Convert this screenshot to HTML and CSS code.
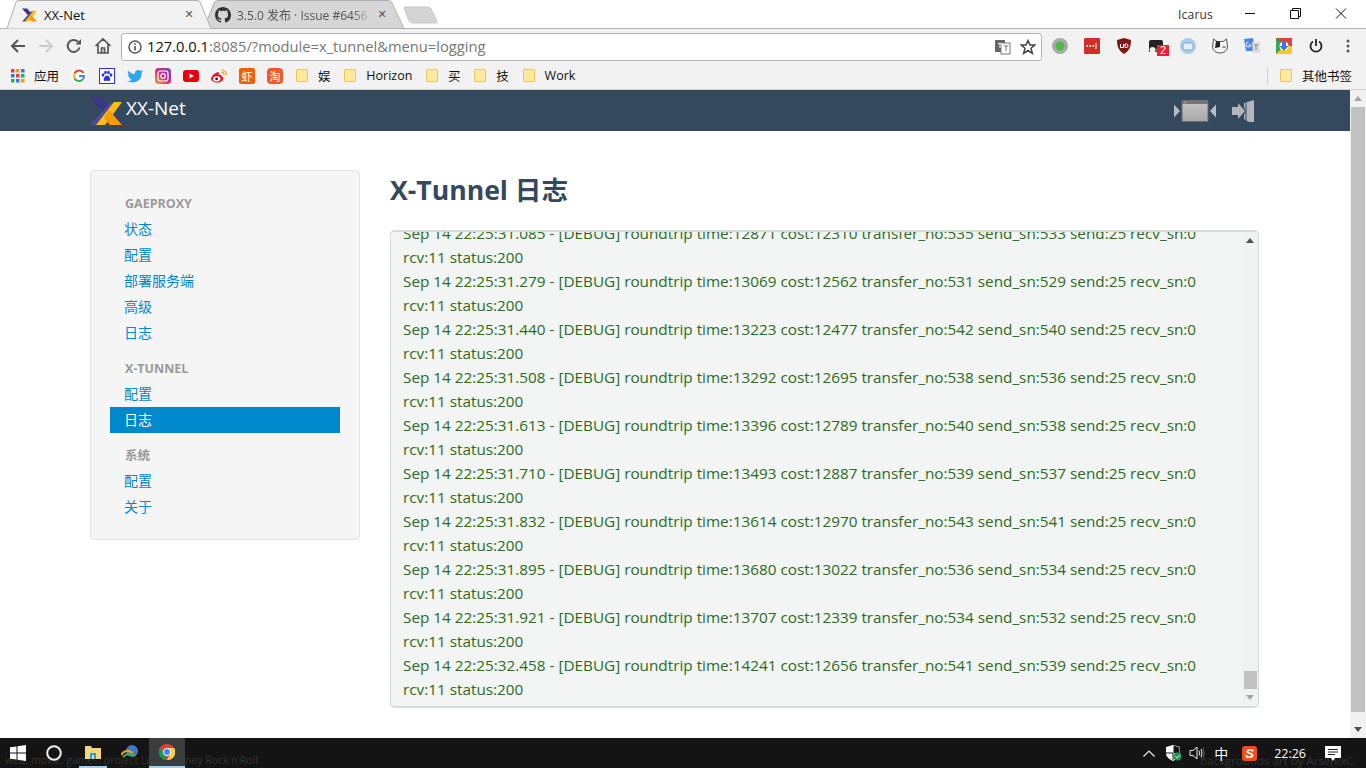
FILE: index.html
```html
<!DOCTYPE html>
<html lang="zh">
<head>
<meta charset="utf-8">
<title>XX-Net</title>
<link rel="stylesheet" href="styles.css">
</head>
<body>
<div class="screen">
  <header class="tabstrip">
    <div class="tab tab-active">
      <svg class="tab-bg" width="212" height="29" viewBox="0 0 212 29"><path d="M0 28.500H7L16 2Q16.500 .5 19 .5H197Q199 .5 200 2L211 28.500" fill="#f2f2f2" stroke="#b0b0b0"/></svg>
      <svg class="tab-ico" width="16" height="16" viewBox="0 0 34 32"><path d="M0 2H11L22 15 16 20Z" fill="#3a3785"/><path d="M0 30L20 8H28L8 30Z" fill="#4b4a9c"/><path d="M24 7H32L15 30H6Z" fill="#fbc00f"/><path d="M19 15L32 30H20L14 23Z" fill="#f59c0c"/></svg>
      <span class="tab-title">XX-Net</span>
      <span class="tab-x">✕</span>
    </div>
    <div class="tab tab-idle">
      <svg class="tab-bg" width="200" height="29" viewBox="0 0 200 29"><path d="M0 28.500H200L188 3Q187 .5 184 .5H14Q11 .5 10 3Z" fill="#d6d6d6" stroke="#b0b0b0"/></svg>
      <svg class="tab-ico" width="16" height="16" viewBox="0 0 16 16"><path fill="#333" d="M8 0C3.58 0 0 3.58 0 8c0 3.54 2.29 6.53 5.47 7.59.4.07.55-.17.55-.38v-1.34c-2.23.48-2.7-1.07-2.7-1.07-.36-.92-.89-1.17-.89-1.17-.73-.5.05-.49.05-.49.8.06 1.23.83 1.23.83.71 1.22 1.87.87 2.33.66.07-.52.28-.87.5-1.07-1.78-.2-3.64-.89-3.64-3.95 0-.87.31-1.59.82-2.15-.08-.2-.36-1.02.08-2.12 0 0 .67-.21 2.2.82A7.7 7.7 0 0 1 8 3.87c.68 0 1.36.09 2 .27 1.53-1.04 2.2-.82 2.2-.82.44 1.1.16 1.92.08 2.12.51.56.82 1.27.82 2.15 0 3.07-1.87 3.75-3.65 3.95.29.25.54.73.54 1.48v2.2c0 .21.15.46.55.38A8 8 0 0 0 16 8c0-4.42-3.58-8-8-8z"/></svg>
      <span class="tab-title tab-fade">3.5.0 发布 · Issue #6456</span>
      <span class="tab-x">✕</span>
    </div>
    <svg class="newtab" width="36" height="18" viewBox="0 0 36 18"><path d="M1 2Q1 1 3 1H25Q27 1 28 3L34 15Q34.500 17 33 17H9Q7 17 6 15Z" fill="#d4d4d4" stroke="#c8c8c8"/></svg>
    <div class="strip-fill"></div>
    <span class="user">Icarus</span>
    <div class="winbtns">
      <svg width="46" height="28" viewBox="0 0 46 28"><path d="M19 13.500H29" stroke="#111"/></svg>
      <svg width="46" height="28" viewBox="0 0 46 28"><path d="M18.500 10.500H26.500V18.500H18.500ZM20.500 10V8.500H28.500V16.500H27" fill="none" stroke="#111"/></svg>
      <svg width="46" height="28" viewBox="0 0 46 28"><path d="M18 8.500L28 18.500M28 8.500L18 18.500" stroke="#111"/></svg>
    </div>
  </header>

  <div class="toolbar">
    <svg class="nav" width="16" height="16" viewBox="0 0 16 16"><path d="M15 8H2M8 2L2 8L8 14" fill="none" stroke="#555" stroke-width="2"/></svg>
    <svg class="nav" width="16" height="16" viewBox="0 0 16 16"><path d="M1 8H14M8 2L14 8L8 14" fill="none" stroke="#ccc" stroke-width="2"/></svg>
    <svg class="nav" width="16" height="16" viewBox="0 0 16 16"><path d="M13.500 9.500A6 6 0 1 1 12 3.700" fill="none" stroke="#555" stroke-width="2"/><path d="M9.500 6.500H15V1Z" fill="#555"/></svg>
    <svg class="nav" width="18" height="18" viewBox="0 0 18 18"><path d="M1.500 9L9 2L16.500 9M4 7.500V16H14V7.500M7.500 16V11H10.500V16" fill="none" stroke="#555" stroke-width="1.700"/></svg>
    <div class="omnibox">
      <svg width="14" height="14" viewBox="0 0 14 14"><circle cx="7" cy="7" r="6" fill="none" stroke="#555" stroke-width="1.500"/><path d="M7 6V10.500M7 3.200V4.800" stroke="#555" stroke-width="1.700"/></svg>
      <span class="url"><b class="url-host">127.0.0.1</b>:8085/?module=x_tunnel&amp;menu=logging</span>
      <svg class="omni-end" width="16" height="16" viewBox="0 0 16 16"><rect x="0" y="1" width="10" height="12" fill="#666"/><rect x="6" y="4" width="9" height="11" fill="#fff" stroke="#777"/><path d="M3 4.500H7M5 4V9" stroke="#fff"/><path d="M9 7H13M11 6.500V12" stroke="#777"/></svg>
      <svg class="omni-star" width="16" height="16" viewBox="0 0 16 16"><path d="M8 1.500L10 6H14.800L11 9.200L12.300 14.300L8 11.500L3.700 14.300L5 9.200L1.200 6H6Z" fill="none" stroke="#444" stroke-width="1.500"/></svg>
    </div>
    <div class="exts">
      <svg width="16" height="16" viewBox="0 0 16 16"><circle cx="8" cy="8" r="8" fill="#aaa"/><circle cx="8" cy="8" r="4.500" fill="#4cb84c"/></svg>
      <svg width="16" height="16" viewBox="0 0 16 16"><rect width="16" height="16" rx="1" fill="#d32d27"/><path d="M2.500 8H4M5.500 8H7M8.500 8H10" stroke="#fff" stroke-width="2"/><path d="M12 5V11" stroke="#fff"/></svg>
      <svg width="16" height="16" viewBox="0 0 16 16"><path d="M8 0L15 2C15 9 13 13 8 16 3 13 1 9 1 2Z" fill="#7e1616"/><path d="M4.500 6V9.500H7.500V6M9 6V9.500H10.500Q12 9.500 12 7.800 12 6 10.500 6Z" fill="none" stroke="#fff"/></svg>
      <div class="ext-badge">
        <svg width="16" height="16" viewBox="0 0 16 16"><path d="M3 1H13Q15 1 15 3V13H1V3Q1 1 3 1Z" fill="#222"/><circle cx="4.500" cy="11" r="3" fill="#eee"/><circle cx="11.500" cy="11" r="3" fill="#eee"/></svg>
        <span class="badge">2</span>
      </div>
      <svg width="16" height="16" viewBox="0 0 16 16"><circle cx="8" cy="8" r="8" fill="#a9cdea"/><rect x="3" y="5" width="10" height="7" rx="1" fill="#e4eef6" stroke="#7fa9cc"/></svg>
      <svg width="16" height="16" viewBox="0 0 16 16"><path d="M1.500 1L5 3.500H11L14.500 1L15.500 9Q14.500 15 8 15 1.500 15 .5 9Z" fill="#f4f4f4" stroke="#555"/><path d="M4 3L8 4V9L3 10Z" fill="#222"/><path d="M10.500 9H13.500" stroke="#333"/></svg>
      <svg width="16" height="16" viewBox="0 0 16 16"><path d="M0 1L9 0L11 13H2Z" fill="#4a86ea"/><path d="M8 4H16V15H9Z" fill="#ddd"/><path d="M4.500 4A2.500 2.500 0 1 0 7 7H4.500" fill="none" stroke="#fff"/><path d="M10 7H14M12 6V12" stroke="#888"/></svg>
      <svg width="16" height="16" viewBox="0 0 16 16"><rect width="16" height="16" fill="#d9443b"/><path d="M0 0V16L8 8Z" fill="#31a853"/><path d="M16 16H0L8 8 16 8Z" fill="#f7cb1d"/><circle cx="8" cy="8" r="4.500" fill="#fff"/><path d="M6 3H10V8H12.500L8 13 3.500 8H6Z" fill="#3b78d8"/></svg>
      <svg width="16" height="14" viewBox="-1 0 16 14"><path d="M4 2.500A5.500 5.500 0 1 0 10 2.500M7 0V7" fill="none" stroke="#222" stroke-width="1.800"/></svg>
      <svg width="16" height="14" viewBox="-6 0 16 14"><circle cx="2" cy="2" r="1.500" fill="#555"/><circle cx="2" cy="7" r="1.500" fill="#555"/><circle cx="2" cy="12" r="1.500" fill="#555"/></svg>
    </div>
  </div>

  <nav class="bookmarks">
    <svg class="apps" width="14" height="14" viewBox="0 0 14 14"><g><rect width="3.500" height="3.500" fill="#d9443b"/><rect x="5" width="3.500" height="3.500" fill="#e8a21a"/><rect x="10" width="3.500" height="3.500" fill="#3c78d8"/><rect y="5" width="3.500" height="3.500" fill="#3c78d8"/><rect x="5" y="5" width="3.500" height="3.500" fill="#d9443b"/><rect x="10" y="5" width="3.500" height="3.500" fill="#3aa655"/><rect y="10" width="3.500" height="3.500" fill="#3aa655"/><rect x="5" y="10" width="3.500" height="3.500" fill="#3c78d8"/><rect x="10" y="10" width="3.500" height="3.500" fill="#e8a21a"/></g></svg>
    <span class="bm-text bm-apps">应用</span>
    <div class="favs">
      <svg width="16" height="16" viewBox="0 0 16 16"><circle cx="8" cy="8" r="8" fill="#fff"/><path d="M12.500 5A5 5 0 0 0 3.500 5.500" fill="none" stroke="#ea4335" stroke-width="2"/><path d="M3.500 5.500A5 5 0 0 0 3.500 10.500" fill="none" stroke="#fbbc05" stroke-width="2"/><path d="M3.500 10.500A5 5 0 0 0 12 11" fill="none" stroke="#34a853" stroke-width="2"/><path d="M8 8H13Q13 10 12 11" fill="none" stroke="#4285f4" stroke-width="2"/></svg>
      <svg width="16" height="16" viewBox="0 0 16 16"><rect x=".5" y=".5" width="15" height="15" fill="#fff" stroke="#2932e1"/><g fill="#2932e1"><ellipse cx="4" cy="7" rx="1.400" ry="1.800"/><ellipse cx="6.500" cy="4.500" rx="1.300" ry="1.800"/><ellipse cx="9.500" cy="4.500" rx="1.300" ry="1.800"/><ellipse cx="12" cy="7" rx="1.400" ry="1.800"/><path d="M8 7.500C10 7.500 12 11 11 12.500 10 13.500 9 12.800 8 12.800S6 13.500 5 12.500C4 11 6 7.500 8 7.500Z"/></g></svg>
      <svg width="16" height="14" viewBox="0 0 16 14"><path d="M16 2Q15 3 14.500 3.200 15.500 2.500 15.800 1.300 14.800 2 13.700 2.100A3.300 3.300 0 0 0 8 5Q4 5 1 1.500 0 4 2.300 6 1.500 6 .8 5.600 1 8 3.500 8.800H2Q2.700 10.500 5 10.800 3 12.300 0 12 9 16 14 8.500 14.600 6 14.500 4 15.500 3.200 16 2Z" fill="#2fa3ec"/></svg>
      <svg width="16" height="16" viewBox="0 0 16 16"><defs><linearGradient id="ig" x1="0" y1="1" x2="1" y2="0"><stop offset="0" stop-color="#f5a623"/><stop offset=".5" stop-color="#d6287f"/><stop offset="1" stop-color="#5a4fcf"/></linearGradient></defs><rect width="16" height="16" rx="3.500" fill="url(#ig)"/><rect x="3" y="3" width="10" height="10" rx="2.500" fill="none" stroke="#fff" stroke-width="1.200"/><circle cx="8" cy="8" r="2.300" fill="none" stroke="#fff" stroke-width="1.200"/></svg>
      <svg width="16" height="12" viewBox="0 0 16 12"><rect width="16" height="12" rx="3" fill="#e60012"/><path d="M6.500 3.500L11 6L6.500 8.500Z" fill="#fff"/></svg>
      <svg width="16" height="14" viewBox="0 0 17 14"><path d="M7 3C3 4 0 8 0 10S3 14 7 14 13 12 13 9.500 11 8 11 7 10 5 8 6C9 3 8 3 7 3Z" fill="#e6162d"/><ellipse cx="6" cy="10" rx="4" ry="2.800" fill="#fff"/><circle cx="6" cy="10" r="1.500" fill="#222"/><path d="M11 3A3 3 0 0 1 14 6M11 .5A5.500 5.500 0 0 1 16.500 6" fill="none" stroke="#f5a623" stroke-width="1.300"/></svg>
      <span class="fav-sq fav-orange">虾</span>
      <span class="fav-sq fav-tao">淘</span>
    </div>
    <div class="folder-row">
      <div class="bm-folder"><i class="folder"></i><span class="bm-text">娱</span></div>
      <div class="bm-folder"><i class="folder"></i><span class="bm-text">Horizon</span></div>
      <div class="bm-folder"><i class="folder"></i><span class="bm-text">买</span></div>
      <div class="bm-folder"><i class="folder"></i><span class="bm-text">技</span></div>
      <div class="bm-folder"><i class="folder"></i><span class="bm-text">Work</span></div>
    </div>
    <div class="strip-fill"></div>
    <div class="bm-other"><i class="folder"></i><span class="bm-text">其他书签</span></div>
  </nav>

  <div class="viewport">
    <div class="page">
      <div class="navbar">
        <div class="brand">
          <svg width="34" height="32" viewBox="0 0 34 32"><path d="M0 2H11L22 15 16 20Z" fill="#3a3785"/><path d="M0 30L20 8H28L8 30Z" fill="#4b4a9c"/><path d="M24 7H32L15 30H6Z" fill="#fbc00f"/><path d="M19 15L32 30H20L14 23Z" fill="#f59c0c"/></svg>
          <span class="brand-name">XX-Net</span>
        </div>
        <div class="strip-fill"></div>
        <svg class="nav-ico" width="42" height="22" viewBox="0 0 42 22"><defs><linearGradient id="win" x1="0" y1="0" x2="0" y2="1"><stop offset="0" stop-color="#c8c8c8"/><stop offset="1" stop-color="#a8a8a8"/></linearGradient></defs><path d="M0 4.500L6 11L0 17.500ZM42 4.500L36 11L42 17.500Z" fill="#b9bcc0"/><rect x="8" y=".5" width="26" height="21" rx="1" fill="url(#win)" stroke="#6d6d6d"/><rect x="8" y=".5" width="26" height="3.500" fill="#777"/><circle cx="11.500" cy="2.300" r=".9" fill="#e0b020"/><circle cx="14" cy="2.300" r=".9" fill="#d04040"/></svg>
        <svg class="nav-ico" width="23" height="22" viewBox="0 0 23 22"><path d="M0 7H6V3L13 11L6 19V15H0Z" fill="#b3b7bc"/><path d="M12 3L22 0V22H17L12 19V15L14 11L12 7Z" fill="#b3b7bc"/><path d="M14 2V20" stroke="#34495e"/></svg>
      </div>
      <div class="content">
        <aside class="sidebar">
          <div class="side-head">GAEPROXY</div>
          <a class="side-link">状态</a>
          <a class="side-link">配置</a>
          <a class="side-link">部署服务端</a>
          <a class="side-link">高级</a>
          <a class="side-link">日志</a>
          <div class="side-head side-gap">X-TUNNEL</div>
          <a class="side-link">配置</a>
          <a class="side-link side-on">日志</a>
          <div class="side-head side-gap">系统</div>
          <a class="side-link">配置</a>
          <a class="side-link">关于</a>
        </aside>
        <main class="main">
          <h1 class="title">X-Tunnel 日志</h1>
          <div class="logbox">
            <div class="log">
              <div>Sep 14 22:25:31.085 - [DEBUG] roundtrip time:12871 cost:12310 transfer_no:535 send_sn:533 send:25 recv_sn:0</div>
              <div>rcv:11 status:200</div>
              <div>Sep 14 22:25:31.279 - [DEBUG] roundtrip time:13069 cost:12562 transfer_no:531 send_sn:529 send:25 recv_sn:0</div>
              <div>rcv:11 status:200</div>
              <div>Sep 14 22:25:31.440 - [DEBUG] roundtrip time:13223 cost:12477 transfer_no:542 send_sn:540 send:25 recv_sn:0</div>
              <div>rcv:11 status:200</div>
              <div>Sep 14 22:25:31.508 - [DEBUG] roundtrip time:13292 cost:12695 transfer_no:538 send_sn:536 send:25 recv_sn:0</div>
              <div>rcv:11 status:200</div>
              <div>Sep 14 22:25:31.613 - [DEBUG] roundtrip time:13396 cost:12789 transfer_no:540 send_sn:538 send:25 recv_sn:0</div>
              <div>rcv:11 status:200</div>
              <div>Sep 14 22:25:31.710 - [DEBUG] roundtrip time:13493 cost:12887 transfer_no:539 send_sn:537 send:25 recv_sn:0</div>
              <div>rcv:11 status:200</div>
              <div>Sep 14 22:25:31.832 - [DEBUG] roundtrip time:13614 cost:12970 transfer_no:543 send_sn:541 send:25 recv_sn:0</div>
              <div>rcv:11 status:200</div>
              <div>Sep 14 22:25:31.895 - [DEBUG] roundtrip time:13680 cost:13022 transfer_no:536 send_sn:534 send:25 recv_sn:0</div>
              <div>rcv:11 status:200</div>
              <div>Sep 14 22:25:31.921 - [DEBUG] roundtrip time:13707 cost:12339 transfer_no:534 send_sn:532 send:25 recv_sn:0</div>
              <div>rcv:11 status:200</div>
              <div>Sep 14 22:25:32.458 - [DEBUG] roundtrip time:14241 cost:12656 transfer_no:541 send_sn:539 send:25 recv_sn:0</div>
              <div>rcv:11 status:200</div>
            </div>
            <div class="logbar">
              <i class="arrow-up arrow-dark"></i>
              <div class="logtrack"><div class="logthumb"></div></div>
              <i class="arrow-down arrow-light"></i>
            </div>
          </div>
        </main>
      </div>
    </div>
    <div class="pagebar">
      <i class="arrow-up arrow-light"></i>
      <div class="pagetrack"><div class="pagethumb"></div></div>
      <i class="arrow-down arrow-dark"></i>
    </div>
  </div>

  <footer class="taskbar">
    <span class="tb-ghost">web, movie, games, project Love, Money Rock'n'Roll</span>
    <span class="tb-ghost tb-ghost-end">backgrounds art by ArsenixC</span>
    <svg class="tb-start" width="16" height="16" viewBox="0 0 16 16"><path d="M0 2.300L6.500 1.400V7.500H0ZM7.500 1.200L16 0V7.500H7.500ZM0 8.500H6.500V14.600L0 13.700ZM7.500 8.500H16V16L7.500 14.800Z" fill="#fff"/></svg>
    <svg class="tb-cortana" width="16" height="16" viewBox="0 0 16 16"><circle cx="8" cy="8" r="6.800" fill="none" stroke="#eee" stroke-width="2"/></svg>
    <div class="tb-app tb-folder tb-open">
      <svg width="16" height="14" viewBox="0 0 16 14"><path d="M0 1H6L7 3H16V14H0Z" fill="#f5d67b"/><path d="M5 14V8H11V14H9V10H7V14Z" fill="#2b9fe3"/></svg>
    </div>
    <div class="tb-app tb-idm">
      <svg width="18" height="14" viewBox="0 0 18 14"><circle cx="11" cy="6" r="6" fill="#3f78c9"/><path d="M0 10Q5 3 12 8" fill="none" stroke="#e8a020" stroke-width="2"/><path d="M2 12Q8 6 14 11" fill="none" stroke="#52b043" stroke-width="2"/></svg>
    </div>
    <div class="tb-app tb-open tb-current">
      <svg width="16" height="16" viewBox="0 0 16 16"><circle cx="8" cy="8" r="8" fill="#db4437"/><path d="M8 16A8 8 0 0 1 1 4L5 10Z" fill="#0f9d58"/><path d="M8 4H15.300A8 8 0 0 1 8 16L11 10Z" fill="#ffcd40"/><circle cx="8" cy="8" r="3.600" fill="#4285f4" stroke="#fff"/></svg>
    </div>
    <div class="strip-fill"></div>
    <div class="tray">
      <svg class="tray-chev" width="12" height="7" viewBox="0 0 12 7"><path d="M.5 6.500L6 1L11.500 6.500" fill="none" stroke="#eee" stroke-width="1.200"/></svg>
      <svg class="tray-shield" width="16" height="16" viewBox="0 0 16 16"><path d="M7 0L14 2V8C14 12 11 14 7 16 3 14 0 12 0 8V2Z" fill="#fff"/><path d="M7.500 .5V8H13.500V2.500Z" fill="#141414"/><path d="M0 8H7V15" fill="none" stroke="#141414"/><circle cx="11.500" cy="11.500" r="4" fill="#1b9a4d"/><path d="M9.500 11.500L11 13L13.500 10.200" fill="none" stroke="#fff"/></svg>
      <svg class="tray-vol" width="16" height="14" viewBox="0 0 16 14"><path d="M1 4.500H4L8 1V13L4 9.500H1Z" fill="none" stroke="#eee"/><path d="M10 4.500Q11.500 7 10 9.500M12 3Q14 7 12 11" fill="none" stroke="#eee"/><path d="M14 1.500Q16.500 7 14 12.500" fill="none" stroke="#666"/></svg>
      <span class="tray-ime">中</span>
      <span class="tray-sogou">S</span>
      <span class="clock">22:26</span>
      <svg class="tray-note" width="16" height="15" viewBox="0 0 16 15"><path d="M0 0H16V12H10L8 15 6 12H0Z" fill="#fff"/><path d="M3 3.500H13M3 6H13M3 8.500H10" stroke="#222"/></svg>
    </div>
  </footer>
</div>
</body>
</html>
```

FILE: styles.css
```css
* { box-sizing: border-box; }
html, body { margin: 0; height: 100%; overflow: hidden; background: #fff; }
body { font-family: "Open Sans", "Noto Sans CJK SC", sans-serif; }
.screen { width: 1366px; height: 768px; display: flex; flex-direction: column; }
.strip-fill { flex: 1; }

/* tab strip */
.tabstrip { height: 29px; flex: none; display: flex; align-items: flex-start; background: #fff; border-bottom: 1px solid #b0b0b0; }
.tab { position: relative; height: 29px; display: flex; align-items: center; font-size: 13px; font-family: "Open Sans", "Noto Sans CJK SC", sans-serif; }
.tab-bg { position: absolute; left: 0; top: 0; }
.tab-ico, .tab-title, .tab-x { position: relative; }
.tab-active { width: 204px; padding-left: 22px; z-index: 2; }
.tab-idle { width: 198px; padding-left: 11px; color: #444; }
.tab-ico { flex: none; margin-right: 6px; }
.tab-title { flex: 1; color: #111; white-space: nowrap; overflow: hidden; }
.tab-fade { color: #555; font-size: 12px; -webkit-mask-image: linear-gradient(90deg, #000 85%, transparent 100%); mask-image: linear-gradient(90deg, #000 85%, transparent 100%); }
.tab-x { flex: none; width: 12px; margin-right: 9px; font-size: 11px; line-height: 12px; color: #555; font-family: "DejaVu Sans", sans-serif; font-weight: bold; text-align: center; }
.tab-idle .tab-x { margin-right: 14px; margin-left: 4px; }
.newtab { margin: 6px 0 0 1px; flex: none; }
.user { font: 12px/29px "Open Sans", sans-serif; color: #333; margin-right: 13px; letter-spacing: .2px; }
.winbtns { display: flex; margin-right: 2px; }

/* toolbar */
.toolbar { height: 33px; flex: none; display: flex; align-items: center; background: #f2f2f2; padding-left: 10px; }
.nav { flex: none; margin-right: 12px; }
.omnibox { width: 921px; height: 28px; flex: none; align-self: flex-start; margin: 4px 0 0 -3px; display: flex; align-items: center; padding: 0 5px 0 6px; background: #fff; border: 1px solid #b4b4b4; border-radius: 3px; }
.url { flex: 1; margin: -2px 0 0 5px; font: 14.700px "Open Sans", sans-serif; color: #777; white-space: nowrap; }
.url-host { font-weight: 400; color: #111; }
.omni-end { margin-right: 9px; }
.exts { flex: 1; display: flex; align-items: center; gap: 16px; padding-left: 10px; }
.ext-badge { position: relative; height: 16px; }
.badge { position: absolute; left: 9px; top: 7px; width: 12px; height: 11px; background: #e8232d; color: #fff; font: 11px/11px "Liberation Sans", sans-serif; text-align: center; }

/* bookmarks */
.bookmarks { height: 28px; flex: none; display: flex; align-items: center; background: #f2f2f2; padding-left: 11px; border-bottom: 1px solid #d0d0d0; }
.apps { flex: none; }
.bm-text { font: 12.500px "Open Sans", "Noto Sans CJK SC", sans-serif; color: #111; white-space: nowrap; }
.bm-apps { margin-left: 9px; }
.favs { display: flex; align-items: center; gap: 12px; margin-left: 12px; }
.fav-sq { width: 16px; height: 16px; border-radius: 2px; color: #fff; font: 11px/16px "Noto Sans CJK SC", sans-serif; text-align: center; }
.fav-orange { background: #f0600a; }
.fav-tao { background: #f05a28; border-radius: 4px; }
.folder-row { display: flex; align-items: center; margin-left: 13px; }
.bm-folder { display: flex; align-items: center; gap: 10px; margin-right: 14px; }
.bm-folder + .bm-folder { margin-left: -.25px; }
.folder { display: block; width: 12px; height: 13px; background: #ffe8a0; border: 1px solid #edc660; border-radius: 1px; }
.bm-other { display: flex; align-items: center; gap: 10px; margin-right: 14px; padding-left: 12px; border-left: 1px solid #d0d0d0; height: 18px; }

/* page */
.viewport { flex: 1; min-height: 0; display: flex; }
.page { flex: 1; min-width: 0; display: flex; flex-direction: column; }
.navbar { height: 41px; flex: none; display: flex; align-items: center; background: #34495e; padding: 0 95px 0 90px; }
.brand { display: flex; align-items: center; gap: 2px; }
.brand-name { color: #fff; font: 19px/24px "Open Sans", sans-serif; margin-top: -6px; }
.nav-ico { margin-left: 16px; flex: none; }
.content { flex: 1; display: flex; align-items: flex-start; padding: 39px 91px 0 90px; gap: 30px; }
.sidebar { width: 270px; height: 370px; flex: none; background: #f5f5f5; border: 1px solid #e3e3e3; border-radius: 4px; padding: 19px; display: flex; flex-direction: column; }
.side-head { height: 26px; padding-left: 15px; font: bold 12.500px/28px "Open Sans", "Noto Sans CJK SC", sans-serif; color: #999; }
.side-gap { margin-top: 9px; }
.side-link { height: 26px; padding-left: 14px; font: 14px/26px "Open Sans", "Noto Sans CJK SC", sans-serif; color: #0088cc; }
.side-on { background: #0088cc; color: #fff; }
.main { flex: 1; min-width: 0; }
.title { margin: 0 0 20px; height: 40px; font: bold 26.600px/41px "Open Sans", "Noto Sans CJK SC", sans-serif; color: #34495e; }
.logbox { height: 478px; display: flex; background: #f3f5f4; border: 1px solid #d5dbd8; border-width: 2px 1px 2px 1px; border-radius: 5px; overflow: hidden; }
.log { flex: 1; min-width: 0; margin-top: -11px; padding-left: 12px; font: 15.300px/24px "Open Sans", sans-serif; color: #2b6a1f; white-space: nowrap; overflow: hidden; }
.logbar, .pagebar { flex: none; width: 16px; display: flex; flex-direction: column; align-items: center; }
.logbar { background: #f1f3f2; }
.logtrack, .pagetrack { flex: 1; width: 100%; display: flex; justify-content: center; }
.logtrack { align-items: flex-end; }
.logthumb { width: 13px; height: 18px; background: #c1c1c1; }
.pagebar { background: #f1f1f1; }
.pagetrack { align-items: flex-start; }
.pagethumb { width: 14px; height: 605px; background: #c1c1c1; }
.arrow-up, .arrow-down { display: block; flex: none; width: 0; height: 0; margin: 6px 0; border-left: 4px solid transparent; border-right: 4px solid transparent; }
.arrow-up { border-bottom: 5px solid #505050; }
.arrow-down { border-top: 5px solid #505050; }
.arrow-up.arrow-light { border-bottom-color: #a3a3a3; }
.arrow-down.arrow-light { border-top-color: #a3a3a3; }

/* taskbar */
.taskbar { position: relative; height: 30px; flex: none; display: flex; align-items: center; background: #141414; padding-left: 10px; overflow: hidden; }
.taskbar > svg, .taskbar > .tb-app, .tray { position: relative; z-index: 1; }
.tb-start { flex: none; }
.tb-cortana { flex: none; margin-left: 20px; }
.tb-app { height: 30px; flex: none; display: flex; align-items: center; justify-content: center; border-bottom: 2px solid transparent; }
.tb-folder { width: 28px; margin-left: 17px; }
.tb-idm { width: 36px; margin-left: 5px; }
.tb-open { border-bottom-color: #9fd0f5; }
.tb-current { width: 36px; margin-left: 1px; background: #3a3d3e; }
.tb-ghost { position: absolute; left: 5px; top: 15px; font: 10.500px/15px "Open Sans", sans-serif; color: #333; white-space: nowrap; }
.tb-ghost-end { left: 1200px; font-size: 11.500px; }
.tray { display: flex; align-items: center; padding-right: 25px; }
.tray-chev { margin-right: 11px; }
.tray-shield { margin-right: 7px; }
.tray-vol { margin-right: 9px; }
.tray-ime { color: #fff; font: 14px "Noto Sans CJK SC", sans-serif; margin-right: 14px; }
.tray-sogou { width: 15px; height: 15px; margin-right: 17px; background: #f04e14; color: #fff; font: italic bold 13px/15px "Liberation Sans", sans-serif; text-align: center; border-radius: 3px; }
.clock { color: #fff; font: 12.500px "Open Sans", sans-serif; margin-right: 19px; }
```
